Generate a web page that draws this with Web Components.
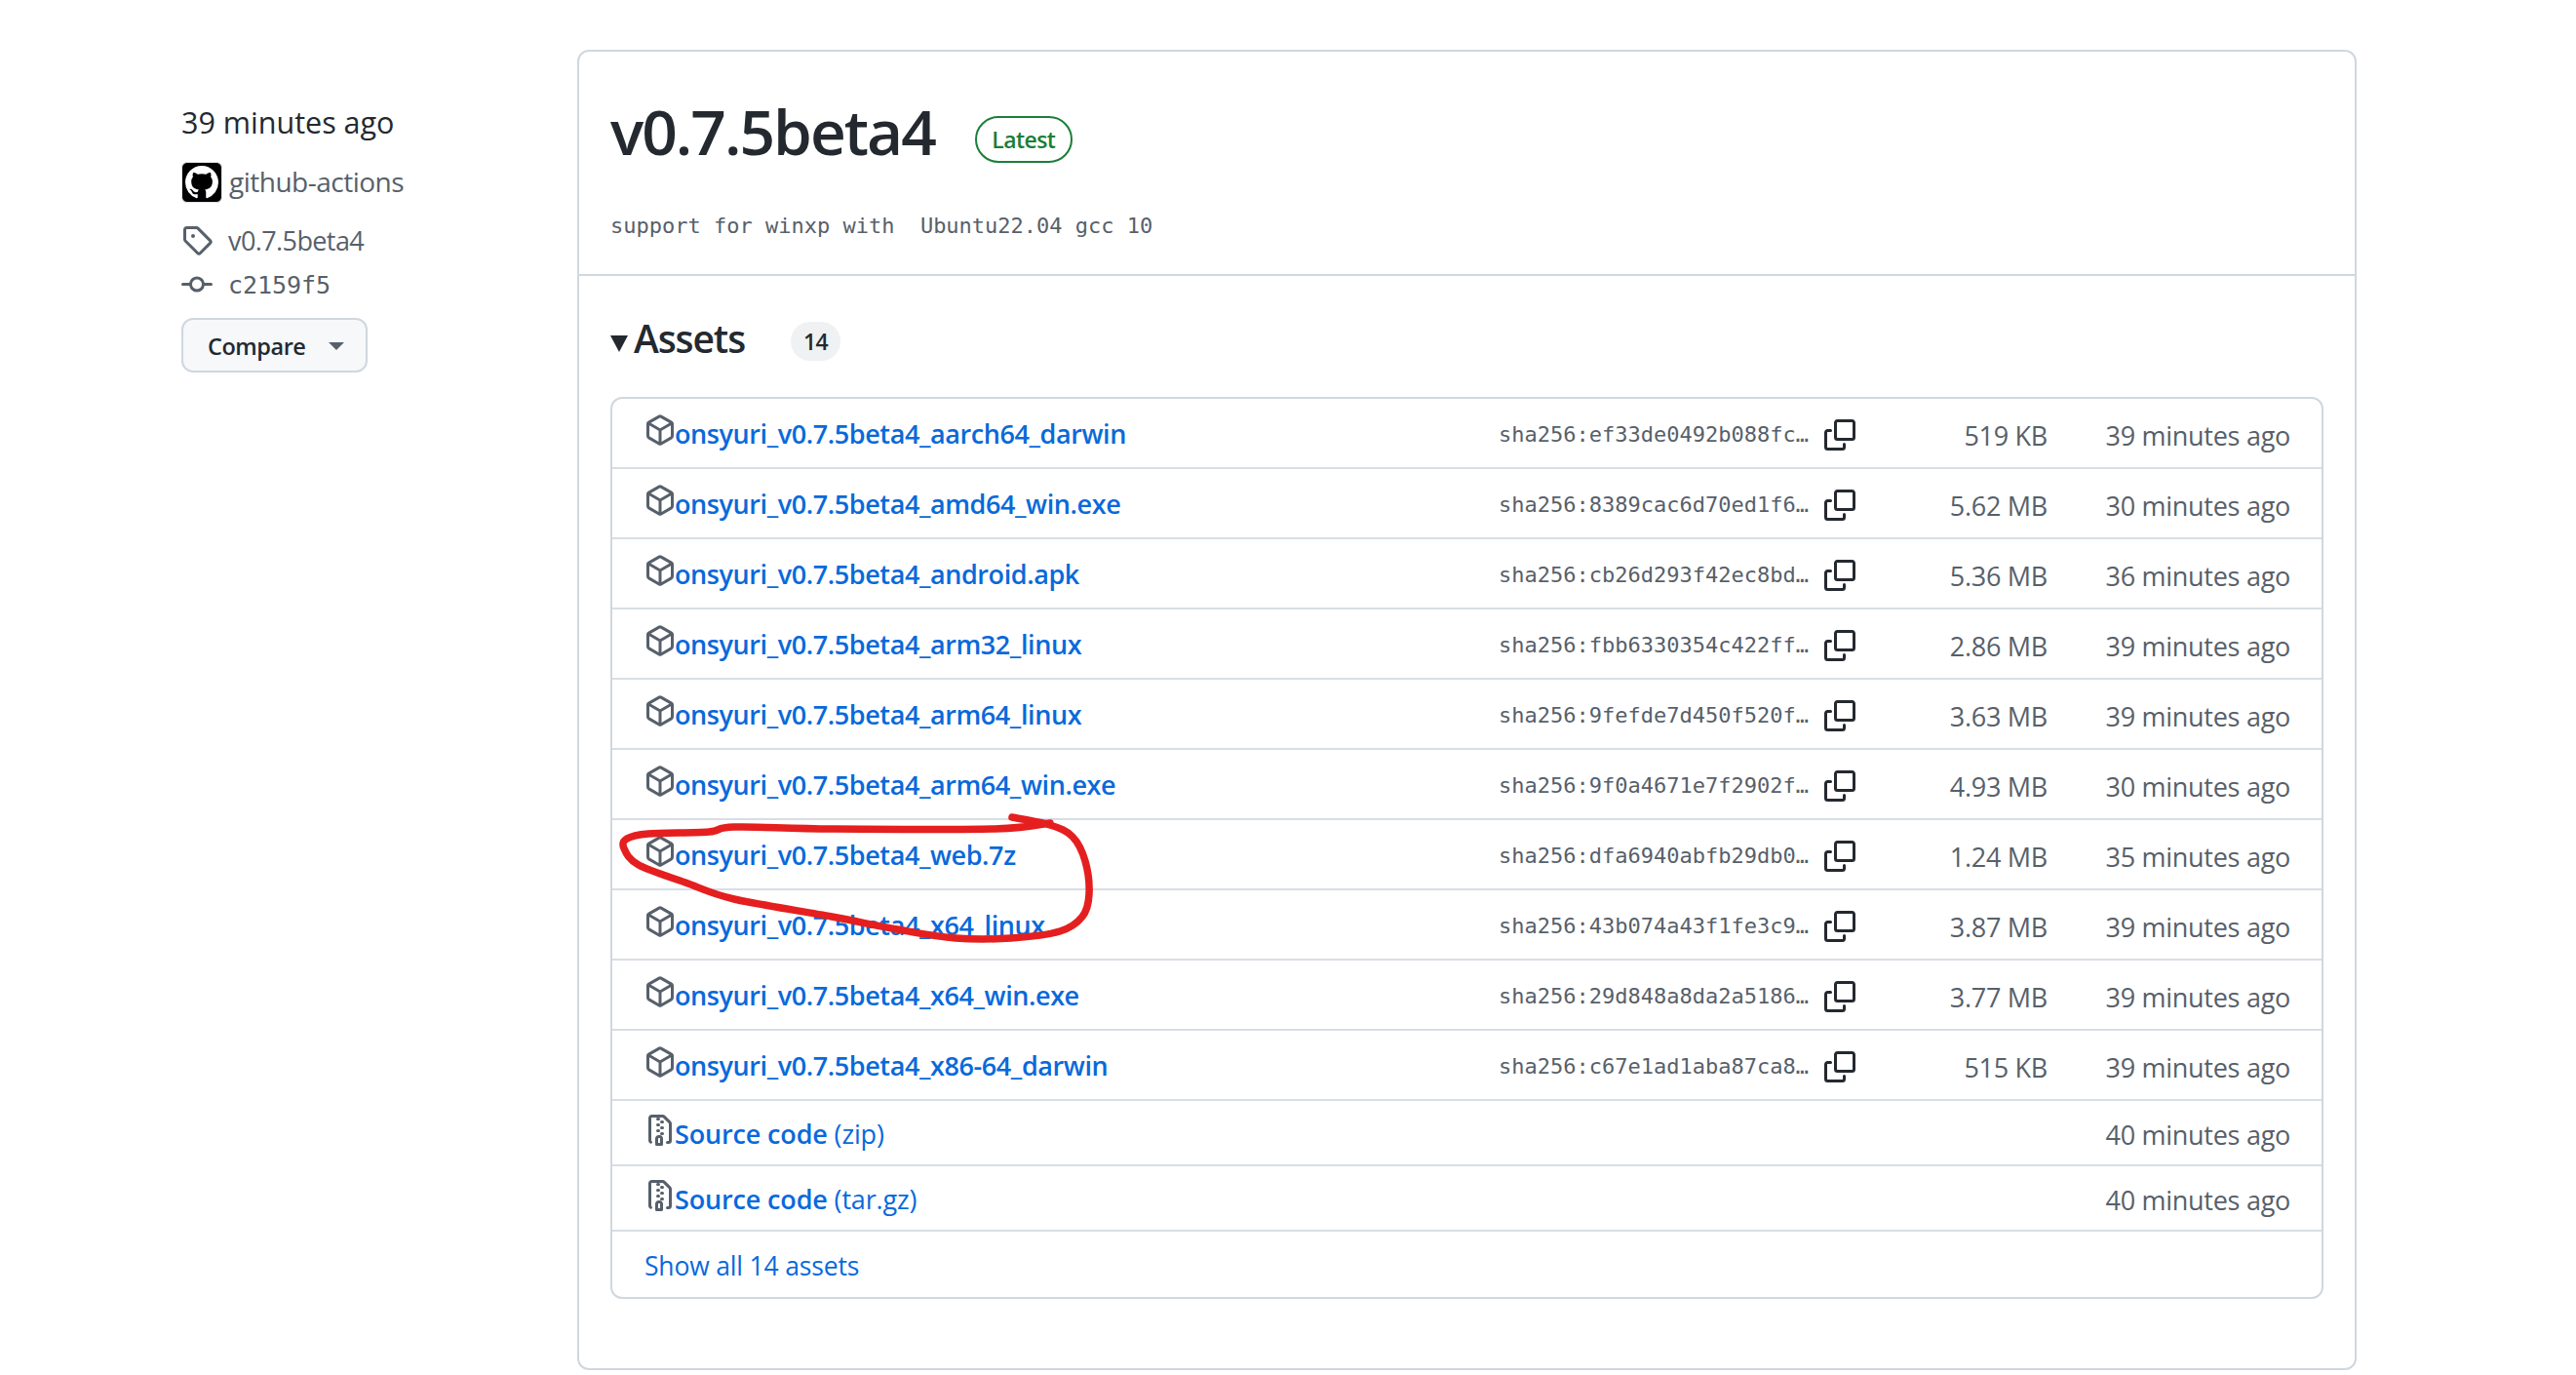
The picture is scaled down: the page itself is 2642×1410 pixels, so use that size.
<!DOCTYPE html>
<html>
<head>
<meta charset="utf-8">
<title>v0.7.5beta4</title>
<style>
  html, body { margin: 0; background: #fff; }
  body { font-family: "Open Sans", "Liberation Sans", sans-serif; color: #24292f; overflow: hidden; }
</style>
</head>
<body>
<release-page></release-page>
<script>
(function () {
  const ICONS = {
    package: 'm8.878.392 5.25 3.045c.54.314.872.89.872 1.514v6.098a1.75 1.75 0 0 1-.872 1.514l-5.25 3.045a1.75 1.75 0 0 1-1.756 0l-5.25-3.045A1.75 1.75 0 0 1 1 11.049V4.951c0-.624.332-1.201.872-1.514L7.122.392a1.75 1.75 0 0 1 1.756 0ZM7.875 1.69l-4.63 2.685L8 7.133l4.755-2.758-4.63-2.685a.248.248 0 0 0-.25 0ZM2.5 5.677v5.372c0 .09.047.171.125.216l4.625 2.683V8.432Zm6.25 8.271 4.625-2.683a.25.25 0 0 0 .125-.216V5.677L8.75 8.432Z',
    zip: 'M3.5 1.75v11.5c0 .09.048.173.126.217a.75.75 0 0 1-.752 1.298A1.748 1.748 0 0 1 2 13.25V1.75C2 .784 2.784 0 3.75 0h5.586c.464 0 .909.185 1.237.513l2.914 2.914c.329.328.513.773.513 1.237v8.586A1.75 1.75 0 0 1 12.25 15h-.5a.75.75 0 0 1 0-1.5h.5a.25.25 0 0 0 .25-.25V4.664a.25.25 0 0 0-.073-.177L9.513 1.573a.25.25 0 0 0-.177-.073H7.25a.75.75 0 0 1 0 1.5h-.5a.75.75 0 0 1 0-1.5h-3a.25.25 0 0 0-.25.25Zm3.75 8.75h.5c.966 0 1.75.784 1.75 1.75v3a.75.75 0 0 1-.75.75h-2.5a.75.75 0 0 1-.75-.75v-3c0-.966.784-1.75 1.75-1.75ZM6 5.25a.75.75 0 0 1 .75-.75h.5a.75.75 0 0 1 0 1.5h-.5A.75.75 0 0 1 6 5.25Zm.75 2.25h.5a.75.75 0 0 1 0 1.5h-.5a.75.75 0 0 1 0-1.5ZM8 6.75A.75.75 0 0 1 8.75 6h.5a.75.75 0 0 1 0 1.5h-.5A.75.75 0 0 1 8 6.75ZM8.75 3h.5a.75.75 0 0 1 0 1.5h-.5a.75.75 0 0 1 0-1.5ZM8 9.75A.75.75 0 0 1 8.75 9h.5a.75.75 0 0 1 0 1.5h-.5A.75.75 0 0 1 8 9.75Zm-1 2.5v2.25h1v-2.25a.25.25 0 0 0-.25-.25h-.5a.25.25 0 0 0-.25.25Z',
    copy: 'M0 6.75C0 5.784.784 5 1.75 5h1.5a.75.75 0 0 1 0 1.5h-1.5a.25.25 0 0 0-.25.25v7.5c0 .138.112.25.25.25h7.5a.25.25 0 0 0 .25-.25v-1.5a.75.75 0 0 1 1.5 0v1.5A1.75 1.75 0 0 1 9.25 16h-7.5A1.75 1.75 0 0 1 0 14.25ZM5 1.75C5 .784 5.784 0 6.75 0h7.5C15.216 0 16 .784 16 1.75v7.5A1.75 1.75 0 0 1 14.25 11h-7.5A1.75 1.75 0 0 1 5 9.25Zm1.75-.25a.25.25 0 0 0-.25.25v7.5c0 .138.112.25.25.25h7.5a.25.25 0 0 0 .25-.25v-7.5a.25.25 0 0 0-.25-.25Z',
    tag: 'M1 7.775V2.75C1 1.784 1.784 1 2.75 1h5.025c.464 0 .91.184 1.238.513l6.25 6.25a1.75 1.75 0 0 1 0 2.474l-5.026 5.026a1.75 1.75 0 0 1-2.474 0l-6.25-6.25A1.752 1.752 0 0 1 1 7.775Zm1.5 0c0 .066.026.13.073.177l6.25 6.25a.25.25 0 0 0 .354 0l5.025-5.025a.25.25 0 0 0 0-.354l-6.25-6.25a.25.25 0 0 0-.177-.073H2.75a.25.25 0 0 0-.25.25ZM6 5a1 1 0 1 1 0 2 1 1 0 0 1 0-2Z',
    commit: 'M11.93 8.5a4.002 4.002 0 0 1-7.86 0H.75a.75.75 0 0 1 0-1.5h3.32a4.002 4.002 0 0 1 7.86 0h3.32a.75.75 0 0 1 0 1.5Zm-1.43-.75a2.5 2.5 0 1 0-5 0 2.5 2.5 0 0 0 5 0Z',
    github: 'M8 0c4.42 0 8 3.58 8 8a8.013 8.013 0 0 1-5.45 7.59c-.4.08-.55-.17-.55-.38 0-.27.01-1.13.01-2.2 0-.75-.25-1.23-.54-1.48 1.78-.2 3.65-.88 3.65-3.95 0-.88-.31-1.59-.82-2.15.08-.2.36-1.02-.08-2.12 0 0-.67-.22-2.2.82-.64-.18-1.32-.27-2-.27-.68 0-1.36.09-2 .27-1.53-1.03-2.2-.82-2.2-.82-.44 1.1-.16 1.92-.08 2.12-.51.56-.82 1.28-.82 2.15 0 3.06 1.86 3.75 3.64 3.95-.23.2-.44.55-.51 1.07-.46.21-1.61.55-2.33-.66-.15-.24-.6-.83-1.23-.82-.67.01-.27.38.01.53.34.19.73.9.82 1.13.16.45.68 1.31 2.69.94 0 .67.01 1.3.01 1.49 0 .21-.15.45-.55.38A7.995 7.995 0 0 1 0 8c0-4.42 3.58-8 8-8Z'
  };

  const MONO = '"DejaVu Sans Mono", "Liberation Mono", monospace';

  const ASSETS = [
    ['onsyuri_v0.7.5beta4_aarch64_darwin', 'sha256:ef33de0492b088fc…', '519 KB', '39 minutes ago'],
    ['onsyuri_v0.7.5beta4_amd64_win.exe', 'sha256:8389cac6d70ed1f6…', '5.62 MB', '30 minutes ago'],
    ['onsyuri_v0.7.5beta4_android.apk', 'sha256:cb26d293f42ec8bd…', '5.36 MB', '36 minutes ago'],
    ['onsyuri_v0.7.5beta4_arm32_linux', 'sha256:fbb6330354c422ff…', '2.86 MB', '39 minutes ago'],
    ['onsyuri_v0.7.5beta4_arm64_linux', 'sha256:9fefde7d450f520f…', '3.63 MB', '39 minutes ago'],
    ['onsyuri_v0.7.5beta4_arm64_win.exe', 'sha256:9f0a4671e7f2902f…', '4.93 MB', '30 minutes ago'],
    ['onsyuri_v0.7.5beta4_web.7z', 'sha256:dfa6940abfb29db0…', '1.24 MB', '35 minutes ago'],
    ['onsyuri_v0.7.5beta4_x64_linux', 'sha256:43b074a43f1fe3c9…', '3.87 MB', '39 minutes ago'],
    ['onsyuri_v0.7.5beta4_x64_win.exe', 'sha256:29d848a8da2a5186…', '3.77 MB', '39 minutes ago'],
    ['onsyuri_v0.7.5beta4_x86-64_darwin', 'sha256:c67e1ad1aba87ca8…', '515 KB', '39 minutes ago']
  ];

  // the hand-drawn red ring, traced from the screenshot
  const SCRIBBLE = [[1038,838],[1077,846],[1100,858],[1113,883],[1117,917],[1110,940],[1087,955],[1037,962],[980,962],[920,953],[853,940],[753,922],[703,905],[655,887],[640,870],[643,860],[665,855],[727,853],[753,848],[853,850],[1020,850],[1077,844]];

  function smoothPath(pts) {
    let d = `M${pts[0][0]} ${pts[0][1]}`;
    for (let i = 0; i < pts.length - 1; i++) {
      const a = pts[i - 1] || pts[i], b = pts[i], c = pts[i + 1], e = pts[i + 2] || c;
      d += ` C${b[0] + (c[0] - a[0]) / 6} ${b[1] + (c[1] - a[1]) / 6} ${c[0] - (e[0] - b[0]) / 6} ${c[1] - (e[1] - b[1]) / 6} ${c[0]} ${c[1]}`;
    }
    return d;
  }

  class OctoIcon extends HTMLElement {
    connectedCallback() {
      const size = this.getAttribute('size') || '32';
      const name = this.getAttribute('name');
      this.attachShadow({ mode: 'open' }).innerHTML = `
        <style>
          :host { display: block; width: ${size}px; height: ${size}px; flex: none; color: inherit; }
          svg { display: block; fill: currentColor; }
        </style>
        <svg width="${size}" height="${size}" viewBox="0 0 16 16" aria-hidden="true"><path fill-rule="evenodd" d="${ICONS[name]}"></path></svg>`;
    }
  }

  class ReleaseSidebar extends HTMLElement {
    connectedCallback() {
      this.attachShadow({ mode: 'open' }).innerHTML = `
        <style>
          :host { display: block; width: 592px; flex: none; box-sizing: border-box; padding: 95px 0 0 186px; color: #57606a; }
          .when { font-size: 30.5px; line-height: 44px; height: 44px; margin-top: 8px; color: #24292f; white-space: nowrap; }
          .who, .meta { display: flex; align-items: center; white-space: nowrap; font-size: 28px; letter-spacing: -.5px; }
          .who { margin-top: 19px; height: 42px; gap: 7px; }
          .who span:last-child { padding-bottom: 3px; }
          .avatar { width: 42px; height: 42px; box-sizing: border-box; border: 1px solid #e1e4e8; border-radius: 6px; background: #000; color: #fff; display: flex; align-items: center; justify-content: center; }
          .tag { margin-top: 20px; height: 36px; font-size: 27px; letter-spacing: -.6px; }
          .tag octo-icon { margin-right: 16px; }
          .commit { margin-top: 10px; height: 36px; font-family: ${MONO}; font-size: 25px; letter-spacing: -.05px; }
          .commit octo-icon { margin-right: 16px; }
          button { display: flex; align-items: center; margin-top: 16px; width: 191px; height: 56px; box-sizing: border-box; padding: 1px 0 0 25px; background: #f6f8fa; border: 2px solid #d0d7de; border-radius: 12px; font: 600 23.5px "Open Sans", sans-serif; letter-spacing: -.45px; color: #24292f; }
          .caret { width: 0; height: 0; margin-left: 24px; border: 8px solid transparent; border-top-color: #57606a; border-bottom-width: 0; }
        </style>
        <div class="when">39 minutes ago</div>
        <div class="who"><span class="avatar"><octo-icon name="github" size="34"></octo-icon></span><span>github-actions</span></div>
        <div class="meta tag"><octo-icon name="tag" size="32"></octo-icon><span>v0.7.5beta4</span></div>
        <div class="meta commit"><octo-icon name="commit" size="32"></octo-icon><span>c2159f5</span></div>
        <button>Compare<span class="caret"></span></button>`;
    }
  }

  class AssetRow extends HTMLElement {
    connectedCallback() {
      const hash = this.getAttribute('hash');
      const kind = hash ? 'package' : 'zip';
      this.attachShadow({ mode: 'open' }).innerHTML = `
        <style>
          :host { display: grid; grid-template-columns: 1fr 334px 33px 196px 249px; align-items: center; box-sizing: border-box; height: 72px; padding: 0 32px 0 33px; border-bottom: 2px solid #d8dee4; white-space: nowrap; }
          :host(:not([hash])) { height: 67px; }
          :host(:not([hash])) .name { letter-spacing: -.15px; padding-top: 2px; }
          :host(:not([hash])) .time { padding-top: 3px; }
          :host(:not([hash])) .name octo-icon { margin-top: -8px; }
          .name { display: flex; align-items: center; color: #0969da; font-size: 27px; font-weight: 600; letter-spacing: -.41px; margin-left: -1px; }
          .name octo-icon { color: #57606a; margin-top: -7px; margin-left: 1px; margin-right: -1px; }
          .name a { color: inherit; text-decoration: none; }
          .name ::slotted(span) { font-weight: 400; }
          .hash { font: 22px ${MONO}; color: #57606a; padding-top: 3px; }
          .copy { color: #24292f; padding-top: 3px; }
          .size, .time { color: #57606a; font-size: 27px; letter-spacing: -.28px; text-align: right; padding-top: 5px; }
        </style>
        <div class="name"><octo-icon name="${kind}" size="32"></octo-icon><a href="#"><slot></slot></a></div>
        <div class="hash">${hash || ''}</div>
        <div class="copy">${hash ? '<octo-icon name="copy" size="32"></octo-icon>' : ''}</div>
        <div class="size">${this.getAttribute('size') || ''}</div>
        <div class="time">${this.getAttribute('time')}</div>`;
    }
  }

  class AssetList extends HTMLElement {
    connectedCallback() {
      const shadow = this.attachShadow({ mode: 'open' });
      shadow.innerHTML = `
        <style>
          :host { display: block; margin: 0 32px 0 32px; border: 2px solid #d0d7de; border-radius: 12px; }
          .show { height: 67px; box-sizing: border-box; padding: 2px 0 0 33px; display: flex; align-items: center; color: #0969da; font-size: 26.5px; letter-spacing: -.17px; }
        </style>
        <slot></slot>
        <div class="show">Show all 14 assets</div>`;
      ASSETS.forEach(a => {
        const row = document.createElement('asset-row');
        row.setAttribute('hash', a[1]);
        row.setAttribute('size', a[2]);
        row.setAttribute('time', a[3]);
        row.textContent = a[0];
        this.appendChild(row);
      });
      ['(zip)', '(tar.gz)'].forEach(s => {
        const row = document.createElement('asset-row');
        row.setAttribute('time', '40 minutes ago');
        row.innerHTML = 'Source code <span>' + s + '</span>';
        this.appendChild(row);
      });
    }
  }

  class ReleaseCard extends HTMLElement {
    connectedCallback() {
      this.attachShadow({ mode: 'open' }).innerHTML = `
        <style>
          :host { display: block; width: 1825px; height: 1354px; box-sizing: border-box; margin-top: 51px; border: 2px solid #d0d7de; border-radius: 12px; flex: none; }
          header { height: 230px; box-sizing: border-box; padding: 0 0 0 32px; border-bottom: 2px solid #d0d7de; }
          .title { display: flex; align-items: center; padding-top: 46px; height: 72px; box-sizing: content-box; }
          h1 { margin: 0; font-size: 64px; font-weight: 600; line-height: 72px; letter-spacing: -2px; color: #24292f; }
          .badge { margin: 16px 0 0 41px; width: 100px; height: 48px; box-sizing: border-box; border: 2px solid #1a7f37; border-radius: 24px; color: #1a7f37; font-size: 23px; font-weight: 600; letter-spacing: -.55px; display: flex; align-items: center; justify-content: center; }
          .desc { margin-top: 46px; font: 22px/30px ${MONO}; color: #57606a; white-space: pre; }
          .assets { display: flex; align-items: center; height: 40px; margin: 47px 0 37px 32px; }
          .tri { width: 0; height: 0; border: 9px solid transparent; border-top: 17px solid #24292f; border-bottom: 0; margin-right: 6px; margin-top: 4px; }
          h2 { margin: -6px 0 0; font-size: 39px; font-weight: 600; letter-spacing: -1.1px; line-height: 40px; color: #24292f; }
          .count { margin-left: 47px; width: 51px; height: 40px; border-radius: 20px; background: #eff1f3; font-size: 23px; font-weight: 600; letter-spacing: -.5px; display: flex; align-items: center; justify-content: center; color: #24292f; }
        </style>
        <header>
          <div class="title"><h1>v0.7.5beta4</h1><span class="badge">Latest</span></div>
          <div class="desc">support for winxp with  Ubuntu22.04 gcc 10</div>
        </header>
        <div class="assets"><span class="tri"></span><h2>Assets</h2><span class="count">14</span></div>
        <asset-list></asset-list>`;
    }
  }

  class ReleasePage extends HTMLElement {
    connectedCallback() {
      this.attachShadow({ mode: 'open' }).innerHTML = `
        <style>
          :host { display: flex; position: relative; width: 2642px; height: 1410px; overflow: hidden; }
          svg.scribble { position: absolute; left: 0; top: 0; pointer-events: none; }
        </style>
        <release-sidebar></release-sidebar>
        <release-card></release-card>
        <svg class="scribble" width="2642" height="1410" viewBox="0 0 2642 1410" fill="none" stroke="#e51f1f" stroke-width="7.5" stroke-linecap="round" stroke-linejoin="round">
          <path d="${smoothPath(SCRIBBLE)}"></path>
        </svg>`;
    }
  }

  customElements.define('octo-icon', OctoIcon);
  customElements.define('release-sidebar', ReleaseSidebar);
  customElements.define('asset-row', AssetRow);
  customElements.define('asset-list', AssetList);
  customElements.define('release-card', ReleaseCard);
  customElements.define('release-page', ReleasePage);
})();
</script>
</body>
</html>
